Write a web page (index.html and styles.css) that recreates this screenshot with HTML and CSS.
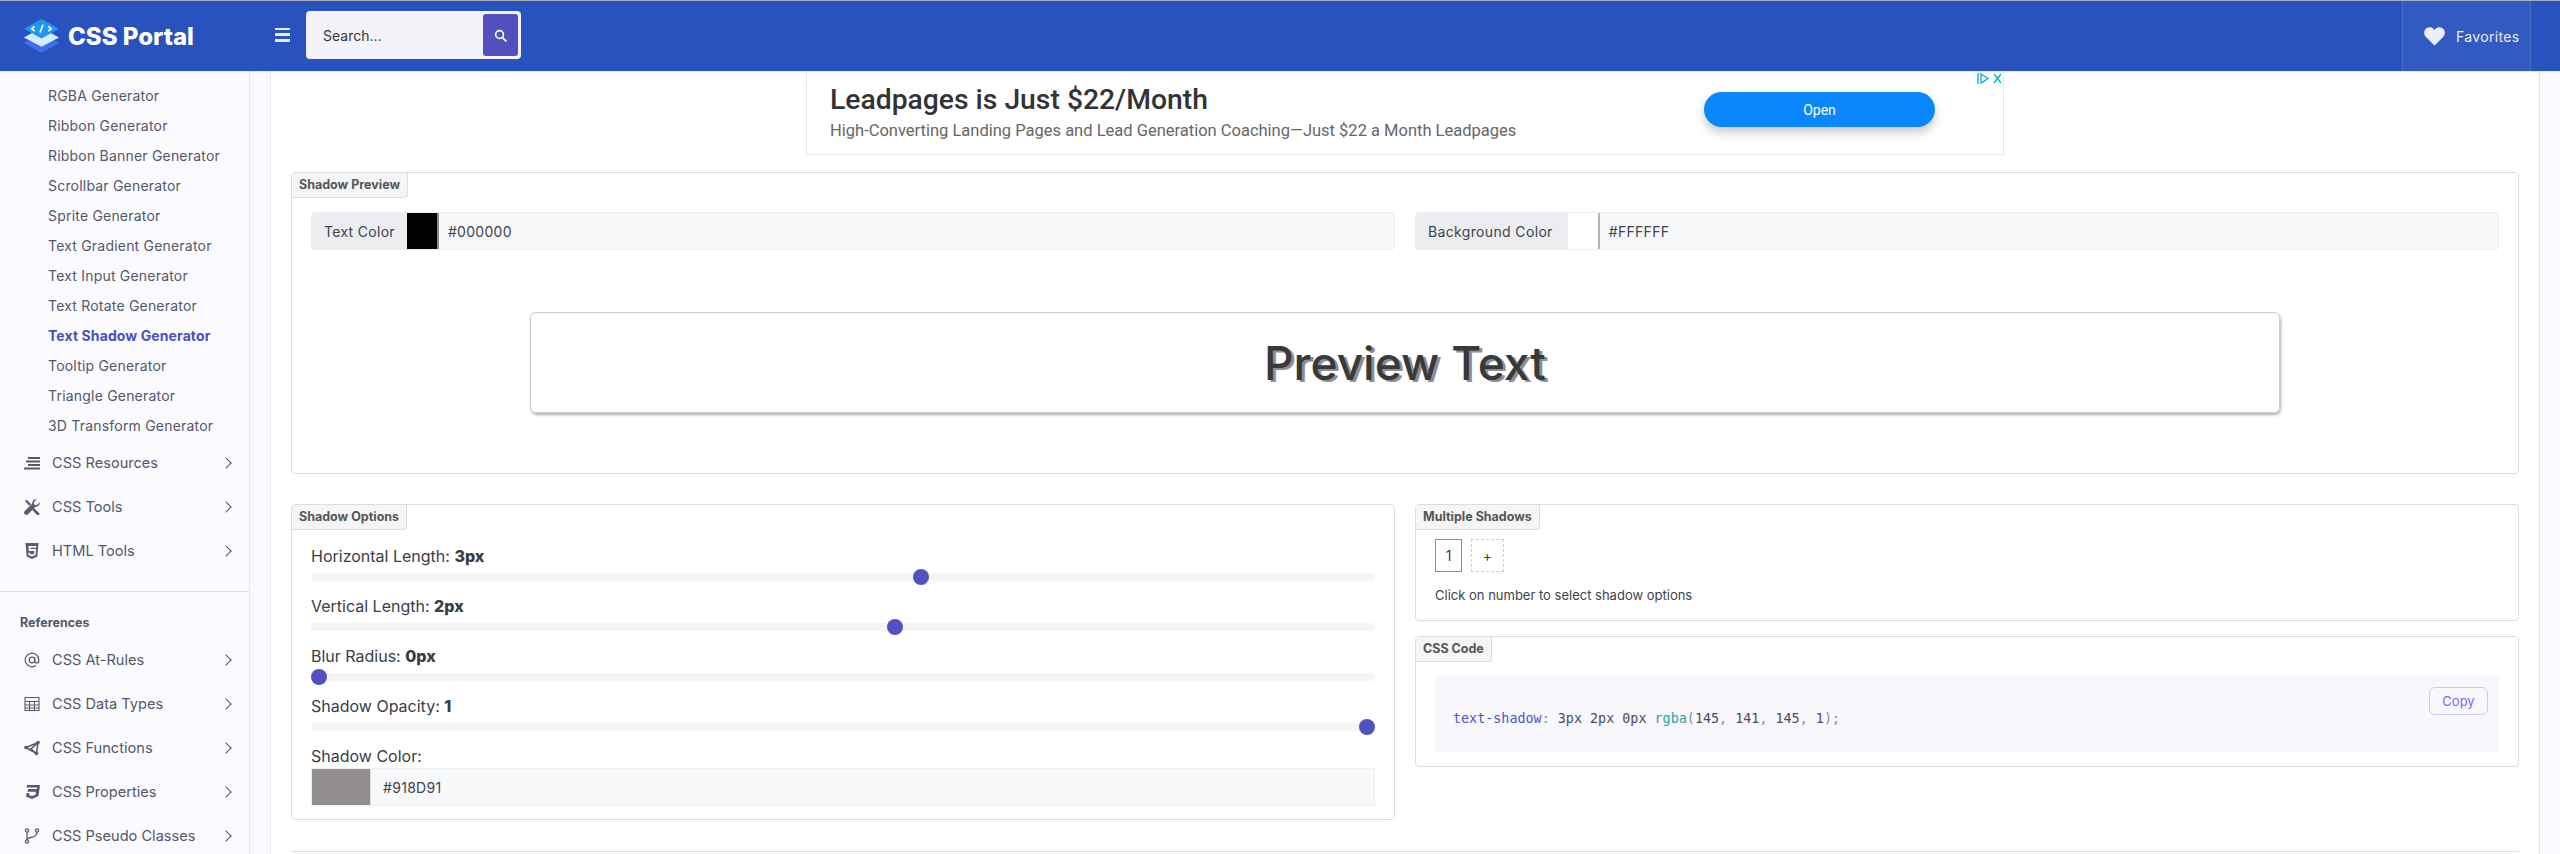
FILE: index.html
```html
<!DOCTYPE html>
<html lang="en">
<head>
<meta charset="utf-8">
<title>Text Shadow Generator - CSS Portal</title>
<link rel="stylesheet" href="styles.css">
</head>
<body>
<header class="topbar">
  <a class="brand">
    <svg class="brand-icon" viewBox="0 0 36 36" width="35" height="35">
      <path d="M18 15 36 24.500 18 35 0 24.500Z" fill="#3f6ff0"/>
      <path d="M18 9 36 19 18 28.500 0 19Z" fill="#d6ebff"/>
      <path d="M18 0 36 10 18 20 0 10Z" fill="#2196f7"/>
      <path d="M11 7.500 8 10l3 2.500M25 7.500 28 10l-3 2.500M19.500 6l-3 8" fill="none" stroke="#fff" stroke-width="1.600"/>
    </svg>
    <span class="brand-name">CSS Portal</span>
  </a>
  <button class="burger" aria-label="Menu"><span></span><span></span><span></span></button>
  <div class="search">
    <span class="search-text">Search...</span>
    <span class="search-btn">
      <svg viewBox="0 0 16 16" width="13" height="13"><circle cx="6.800" cy="6.800" r="4.800" fill="none" stroke="#fff" stroke-width="2"/><path d="m10.500 10.500 4 4" stroke="#fff" stroke-width="2.200" stroke-linecap="round"/></svg>
    </span>
  </div>
  <div class="fav">
    <svg viewBox="0 0 24 22" width="21" height="19"><path d="M12 21.500 2 11.500C-.8 8.500-.5 4 2.300 1.800 5-.4 9-.1 11 2.300l1 1.200 1-1.200c2-2.400 6-2.700 8.700-.5 2.800 2.200 3.100 6.700.3 9.700Z" fill="#eceef6"/></svg>
    <span>Favorites</span>
  </div>
</header>
<div class="layout">
  <aside class="sidebar">
    <ul class="subnav">
      <li>RGBA Generator</li>
      <li>Ribbon Generator</li>
      <li>Ribbon Banner Generator</li>
      <li>Scrollbar Generator</li>
      <li>Sprite Generator</li>
      <li>Text Gradient Generator</li>
      <li>Text Input Generator</li>
      <li>Text Rotate Generator</li>
      <li class="active">Text Shadow Generator</li>
      <li>Tooltip Generator</li>
      <li>Triangle Generator</li>
      <li>3D Transform Generator</li>
    </ul>
    <ul class="mainnav tools">
      <li>
        <svg class="nav-icon" viewBox="0 0 16 16"><path d="M4 2h12v2H4zM2 5.500h14v2H2zM4 9h12v2H4zM0 12.500h16v2H0z" fill="#555b70"/></svg>
        <span>CSS Resources</span><i class="chev"></i>
      </li>
      <li>
        <svg class="nav-icon" viewBox="0 0 16 16"><path d="M1 2 2.500.7 7 5 5.300 6.700ZM10 9l5 5a1.300 1.300 0 0 1-2 2L8.300 11ZM15.700 3.300 13 6l-2.800-.3L10 3l2.700-2.700C10.500-.2 8 1.500 8.300 4.500L.8 12a2.200 2.200 0 0 0 3.200 3.200L11.500 7.700c3 .3 4.700-2.200 4.200-4.400Z" fill="#555b70"/></svg>
        <span>CSS Tools</span><i class="chev"></i>
      </li>
      <li>
        <svg class="nav-icon" viewBox="0 0 16 16"><path d="M1.500 0h13l-1.200 13.500L8 16l-5.300-2.500ZM4.500 3l.3 5h5.500l-.2 2.700L8 11.500l-2-.8-.1-1H4.300l.2 2.300L8 13.500l3.500-1.500.6-6H6.400l-.1-1.300h6L12.500 3Z" fill="#555b70" fill-rule="evenodd"/></svg>
        <span>HTML Tools</span><i class="chev"></i>
      </li>
    </ul>
    <div class="nav-title">References</div>
    <ul class="mainnav refs">
      <li>
        <svg class="nav-icon" viewBox="0 0 16 16"><circle cx="8" cy="8" r="2.800" fill="none" stroke="#555b70" stroke-width="1.200"/><path d="M10.800 5.200V9a2 2 0 0 0 4 0V8a6.800 6.800 0 1 0-3 5.600" fill="none" stroke="#555b70" stroke-width="1.200"/></svg>
        <span>CSS At-Rules</span><i class="chev"></i>
      </li>
      <li>
        <svg class="nav-icon" viewBox="0 0 16 16"><path d="M1 1.500h14v13H1zM1 5.500h14M1 9h14M1 12h14M5.500 5.500v9M10.500 5.500v9" fill="none" stroke="#555b70" stroke-width="1.100"/></svg>
        <span>CSS Data Types</span><i class="chev"></i>
      </li>
      <li>
        <svg class="nav-icon" viewBox="0 0 16 16"><path d="M2 7.500 14 2.500 12.500 13.500ZM14 2.500 7 9l5.500 4.500" fill="none" stroke="#555b70" stroke-width="1.600"/><circle cx="2" cy="7.500" r="1.800" fill="#555b70"/><circle cx="14" cy="2.500" r="1.800" fill="#555b70"/><circle cx="12.500" cy="13.500" r="1.800" fill="#555b70"/></svg>
        <span>CSS Functions</span><i class="chev"></i>
      </li>
      <li>
        <svg class="nav-icon" viewBox="0 0 16 16"><path d="M3 1h13l-1.500 11L8 15l-6-2.500.5-3.500h3L5 11l3 1 3.500-1.200.5-3H3.500L4 5h9l.3-1.500H2.500Z" fill="#555b70"/></svg>
        <span>CSS Properties</span><i class="chev"></i>
      </li>
      <li>
        <svg class="nav-icon" viewBox="0 0 16 16"><circle cx="3" cy="2.500" r="1.600" fill="none" stroke="#555b70" stroke-width="1.300"/><circle cx="3" cy="13.500" r="1.600" fill="none" stroke="#555b70" stroke-width="1.300"/><circle cx="13" cy="2.500" r="1.600" fill="none" stroke="#555b70" stroke-width="1.300"/><path d="M3 4v8M13 4c0 4-3 5-6 5.500S3 10.500 3 12" fill="none" stroke="#555b70" stroke-width="1.300"/></svg>
        <span>CSS Pseudo Classes</span><i class="chev"></i>
      </li>
    </ul>
  </aside>
  <main class="main">
    <div class="content">
      <div class="ad">
        <div class="ad-copy">
          <div class="ad-title">Leadpages is Just $22/Month</div>
          <div class="ad-sub">High-Converting Landing Pages and Lead Generation Coaching—Just $22 a Month Leadpages</div>
        </div>
        <span class="ad-btn">Open</span>
        <span class="ad-mark">
          <svg viewBox="0 0 30 13" width="30" height="13"><path d="M5 1v11M8 2l7 4.500L8 11Z" fill="none" stroke="#00aecd" stroke-width="1.300"/><path d="M21 2l7 9M28 2l-7 9" stroke="#00aecd" stroke-width="1.300"/></svg>
        </span>
      </div>

      <section class="panel preview-panel">
        <h3 class="tab">Shadow Preview</h3>
        <div class="color-row">
          <div class="group">
            <span class="addon">Text Color</span>
            <span class="swatch swatch-black"></span>
            <span class="field">#000000</span>
          </div>
          <div class="group">
            <span class="addon addon-wide">Background Color</span>
            <span class="swatch swatch-white"></span>
            <span class="field">#FFFFFF</span>
          </div>
        </div>
        <div class="preview-box">Preview Text</div>
      </section>

      <div class="columns">
        <section class="panel options">
          <h3 class="tab">Shadow Options</h3>
          <div class="options-body">
            <div class="slider-block">
              <div class="slider-label">Horizontal Length: <b>3px</b></div>
              <div class="track"><span class="thumb" style="left:57.37%"></span></div>
            </div>
            <div class="slider-block">
              <div class="slider-label">Vertical Length: <b>2px</b></div>
              <div class="track"><span class="thumb" style="left:54.87%"></span></div>
            </div>
            <div class="slider-block">
              <div class="slider-label">Blur Radius: <b>0px</b></div>
              <div class="track"><span class="thumb" style="left:0.75%"></span></div>
            </div>
            <div class="slider-block">
              <div class="slider-label">Shadow Opacity: <b>1</b></div>
              <div class="track"><span class="thumb" style="left:99.25%"></span></div>
            </div>
            <div class="slider-label slider-label-last">Shadow Color:</div>
            <div class="group shadow-color">
              <span class="swatch swatch-shadow"></span>
              <span class="field">#918D91</span>
            </div>
          </div>
        </section>
        <div class="right-col">
          <section class="panel multi">
            <h3 class="tab">Multiple Shadows</h3>
            <div class="multi-body">
              <div class="chips">
                <span class="chip chip-on">1</span>
                <span class="chip chip-add">+</span>
              </div>
              <p class="hint">Click on number to select shadow options</p>
            </div>
          </section>
          <section class="panel code-panel">
            <h3 class="tab">CSS Code</h3>
            <div class="code-body">
              <pre class="code"><span class="c-prop">text-shadow</span><span class="c-dim">:</span> 3px 2px 0px <span class="c-fn">rgba</span><span class="c-dim">(</span>145<span class="c-dim">,</span> 141<span class="c-dim">,</span> 145<span class="c-dim">,</span> 1<span class="c-dim">);</span></pre>
              <span class="copy">Copy</span>
            </div>
          </section>
        </div>
      </div>
      <hr class="rule">
    </div>
  </main>
</div>
</body>
</html>
```
FILE: styles.css
```css
* { box-sizing: border-box; }
html, body { margin: 0; height: 854px; overflow: hidden; }
body {
  font-family: "Inter", "Noto Sans", sans-serif;
  font-size: 14px;
  color: #3a3d45;
  background: #fff;
}
ul { list-style: none; margin: 0; padding: 0; }

.topbar {
  height: 71px;
  display: flex;
  align-items: center;
  background: #2852bd;
  border-top: 1px solid #a5adb8;
  position: relative;
  z-index: 2;
  box-shadow: 0 1px 1px rgba(40, 60, 120, .12);
}
.brand { display: flex; align-items: center; width: 275px; padding-left: 24px; }
.brand-icon { flex: none; }
.brand-name {
  margin-left: 9px;
  color: #fff;
  font-size: 24px;
  font-weight: 800;
  white-space: nowrap;
}
.burger {
  width: 15px; height: 14px; padding: 0; margin-top: -3px;
  border: 0; background: none;
  display: flex; flex-direction: column; justify-content: space-between;
}
.burger span { display: block; height: 2.500px; background: #e6e9f5; }
.search {
  margin-left: 16px;
  width: 215px; height: 48px;
  display: flex; align-items: center; justify-content: space-between;
  padding: 3px;
  background: #f3f3f9;
  border-radius: 4px;
  margin-top: -2px;
}
.search-text { padding-left: 14px; font-size: 14px; color: #33363d; }
.search-btn {
  width: 35px; height: 42px;
  display: flex; align-items: center; justify-content: center;
  background: #5150bc;
  border-radius: 3px;
}
.fav {
  margin-left: auto;
  margin-right: 29px;
  width: 129px; height: 70px;
  display: flex; align-items: center; gap: 11px;
  padding-left: 21px;
  color: #eceef6;
  font-size: 14px;
  letter-spacing: .35px;
  background: rgba(255, 255, 255, .05);
  border-left: 1px solid rgba(255, 255, 255, .12);
  border-right: 1px solid rgba(255, 255, 255, .12);
}

.layout { display: flex; height: 783px; }
.sidebar {
  width: 250px; flex: none;
  background: #fbfbff;
  border-right: 1px solid #e6e7ee;
  overflow: hidden;
  color: #53576a;
  font-size: 14px;
}
.subnav { padding-top: 10px; }
.subnav li {
  height: 30px; line-height: 30px;
  padding-left: 48px;
  letter-spacing: .2px;
  white-space: nowrap;
}
.subnav .active { color: #4a4fc0; font-weight: 700; letter-spacing: .1px; }
.mainnav li {
  display: flex; align-items: center;
  height: 44px;
  padding-left: 24px;
  font-size: 14.600px;
  white-space: nowrap;
}
.mainnav span { margin-left: 12px; }
.tools { padding-bottom: 18px; border-bottom: 1px solid #d8d9e2; }
.nav-icon { width: 16px; height: 16px; flex: none; }
.chev {
  margin-left: auto; margin-right: 19px;
  width: 8px; height: 8px;
  border-top: 1.600px solid #53576a;
  border-right: 1.600px solid #53576a;
  transform: rotate(45deg);
}
.nav-title {
  padding: 23px 0 0 20px;
  height: 46px;
  font-size: 12.500px; font-weight: 700;
  color: #53576a;
}

.main { flex: 1; min-width: 0; background: #fbfbff; padding-right: 20px; display: flex; }
.content {
  flex: 1; min-width: 0;
  background: #fff;
  border-left: 1px solid #e9e9ef;
  border-right: 1px solid #e3e3e8;
  padding: 0 20px;
  margin-left: 20px;
}

.ad {
  position: relative;
  width: 1198px; height: 84px;
  margin: 0 auto 17px;
  padding-left: 23px;
  display: flex; align-items: center; justify-content: space-between;
  border: 1px solid #e9e9ec;
  border-top: 0;
  font-family: "Roboto", sans-serif;
}
.ad-title { font-size: 28.300px; font-weight: 500; color: #333; line-height: 36px; margin-top: 0; }
.ad-sub { font-size: 16.500px; color: #666; line-height: 24px; margin-top: 1px; }
.ad-btn {
  width: 231px; height: 35px; margin-right: 68px; margin-top: -6px;
  display: flex; align-items: center; justify-content: center;
  background: #0a87fc;
  color: #fff; font-size: 14px;
  border-radius: 18px;
  box-shadow: 0 6px 10px rgba(80, 90, 110, .3);
}
.ad-mark { position: absolute; top: 1px; right: 0; line-height: 0; }

.panel {
  border: 1px solid #dddde0;
  border-radius: 4px;
  background: #fff;
}
.tab {
  margin: 0;
  width: fit-content;
  height: 25px;
  line-height: 23px;
  padding: 0 7px;
  font-size: 12.500px; font-weight: 700;
  color: #555;
  background: #f5f5f5;
  border-right: 1px solid #dddde0;
  border-bottom: 1px solid #dddde0;
  border-radius: 0 0 4px 0;
}
.preview-panel { height: 302px; }
.color-row { display: grid; grid-template-columns: 1fr 1fr; gap: 20px; padding: 14px 19px 0; }
.group {
  display: flex; height: 38px;
  background: #f7f8fa;
  border: 1px solid #eeeef2;
  border-radius: 4px;
  overflow: hidden;
}
.addon {
  display: flex; align-items: center;
  padding: 0 12px;
  background: #ecedf0;
  font-size: 14px; color: #3f424a;
  letter-spacing: .3px;
}
.addon-wide { padding-right: 15px; letter-spacing: .35px; }
.swatch { width: 32px; flex: none; border-right: 2px solid #8a8a8a; }
.swatch-black { background: #000; }
.swatch-white { background: #fff; border-right-color: #b5b5b8; }
.field { display: flex; align-items: center; padding-left: 9px; font-size: 14px; color: #3f424a; letter-spacing: .3px; }
.preview-box {
  width: 1750px; height: 101px;
  margin: 62px auto 0;
  display: flex; align-items: center; justify-content: center;
  font-size: 46px; font-weight: 500;
  color: #383a3a;
  text-shadow: 3px 2px 0 rgba(145, 141, 145, 1);
  border: 1px solid #ccc;
  border-radius: 6px;
  box-shadow: 1px 2px 3px rgba(0, 0, 0, .3);
}

.columns {
  display: grid; grid-template-columns: 1104px 1104px; gap: 20px;
  margin-top: 30px;
}
.options { height: 316px; }
.options-body { padding: 10px 19px 0; }
.slider-block { height: 50px; }
.slider-label { height: 33px; line-height: 32px; font-size: 16px; color: #3a3d45; }
.slider-label b { font-weight: 800; }
.slider-label-last { height: 30px; }
.track { position: relative; height: 8px; background: #f5f5f5; border-radius: 4px; }
.thumb {
  position: absolute; top: -4px;
  width: 16px; height: 16px; margin-left: -8px;
  background: #5052bf;
  border-radius: 50%;
}
.shadow-color { border-radius: 0; margin-top: -2px; }
.swatch-shadow { width: 59px; background: #918d91; border-right: 1px solid #e0e0e4; }
.shadow-color .field { padding-left: 12px; }

.right-col { display: flex; flex-direction: column; gap: 15px; }
.multi { height: 117px; }
.multi-body { padding: 9px 19px 0; }
.chips { display: flex; gap: 9px; }
.chip {
  height: 33px;
  display: flex; align-items: center; justify-content: center;
  font-size: 14px;
}
.chip-on { width: 27px; border: 1px solid #1fb3e6; }
.chip-add { width: 33px; border: 1px dashed #cfcfcf; }
.hint { margin: 15px 0 0; font-size: 13px; color: #3f424a; }
.code-panel { height: 131px; }
.code-body { position: relative; margin: 14px 19px 0; height: 76px; background: #f7f7fc; }
.code {
  margin: 0;
  padding-top: 33px; padding-left: 18px;
  font-family: "DejaVu Sans Mono", monospace;
  font-size: 13.400px; line-height: 20px;
  color: #4a4c5e;
}
.c-prop { color: #4a55c8; }
.c-fn { color: #22a8a0; }
.c-dim { color: #8a8c9a; }
.copy {
  position: absolute; top: 11px; right: 11px;
  width: 59px; height: 28px;
  display: flex; align-items: center; justify-content: center;
  color: #6f6ff0; font-size: 13px;
  border: 1px solid #c9c9f5;
  border-radius: 6px;
  background: #f7f7fc;
}
.rule { margin: 31px 0 0; border: 0; border-top: 1px solid #dddde0; }
```
